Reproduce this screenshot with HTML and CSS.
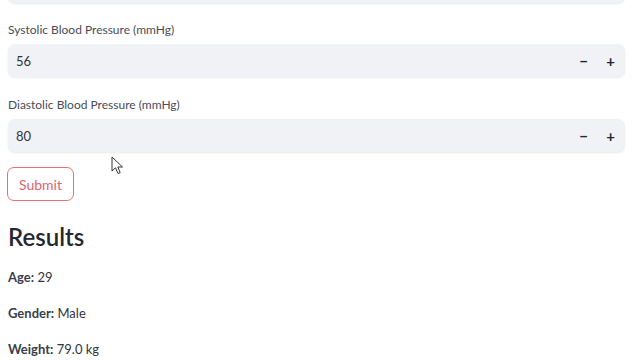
FILE: index.html
```html
<!DOCTYPE html>
<html lang="en">
<head>
    <meta charset="UTF-8">
    <meta name="viewport" content="width=device-width, initial-scale=1.0">
    <title>Health Form</title>
    <link rel="stylesheet" href="styles.css">
</head>
<body>
<div class="page">
    <div class="field field-cut">
        <div class="number-input"></div>
    </div>

    <div class="field">
        <label class="field-label">Systolic Blood Pressure (mmHg)</label>
        <div class="number-input">
            <span class="value">56</span>
            <span class="step">&minus;</span>
            <span class="step">+</span>
        </div>
    </div>

    <div class="field">
        <label class="field-label">Diastolic Blood Pressure (mmHg)</label>
        <div class="number-input">
            <span class="value">80</span>
            <span class="step">&minus;</span>
            <span class="step">+</span>
        </div>
    </div>

    <button class="submit">Submit</button>

    <h2 class="results-title">Results</h2>
    <p class="result"><b>Age:</b> 29</p>
    <p class="result"><b>Gender:</b> Male</p>
    <p class="result"><b>Weight:</b> 79.0 kg</p>
</div>

<!-- mouse pointer captured in the screenshot -->
<svg class="cursor" width="13" height="20" viewBox="0 0 13 20">
    <path d="M1 1 L1 15 L4.5 11.8 L7 17.5 L9.2 16.6 L6.8 11 L11.5 11 Z" fill="#ffffff" stroke="#333333" stroke-width="1"/>
</svg>
</body>
</html>
```

FILE: styles.css
```css
html {
  margin: 0px;
}
body {
  margin: 0;
  background-color: #ffffff;
  font-family: "Lato", "Open Sans", sans-serif;
  color: #31333f;
  overflow: hidden;
}
.page {
  padding: 0 15px 0 8px;
  margin-top: -30px;
}
.field {
  margin-bottom: 19px;
}
.field + .field {
  margin-bottom: 20px;
}
.field-cut .number-input {
  height: 33px;
}
.field-label {
  display: block;
  font-size: 12px;
  color: #4a4c56;
  margin-bottom: 6px;
  height: 16px;
  line-height: 16px;
}
.number-input {
  display: flex;
  align-items: center;
  height: 33px;
  background-color: #f0f2f6;
  border-radius: 7px;
  box-shadow: 0px 1px 2px #e8e9ee;
  padding: 0 1px 0 8px;
}
.value {
  flex: 1;
  font-size: 13px;
  color: #31333f;
}
.step {
  width: 27px;
  text-align: center;
  font-size: 15px;
  font-weight: bold;
  color: #262730;
}
.submit {
  display: block;
  margin: -5px 0 0 -1px;
  height: 34px;
  padding: 0 11px;
  background-color: #ffffff;
  border: 1px solid #e7717b;
  border-radius: 7px;
  color: #e0626d;
  font-family: "Lato", "Open Sans", sans-serif;
  font-size: 14px;
}
.results-title {
  margin: 21px 0 0 0;
  font-size: 24px;
  font-weight: 600;
  color: #262730;
  line-height: 30px;
}
.result {
  margin: 15px 0 0 0;
  font-size: 13px;
  line-height: 21px;
}
.result b {
  font-weight: bold;
  color: #3b3d48;
}
.cursor {
  position: absolute;
  left: 111px;
  top: 156px;
}
```
